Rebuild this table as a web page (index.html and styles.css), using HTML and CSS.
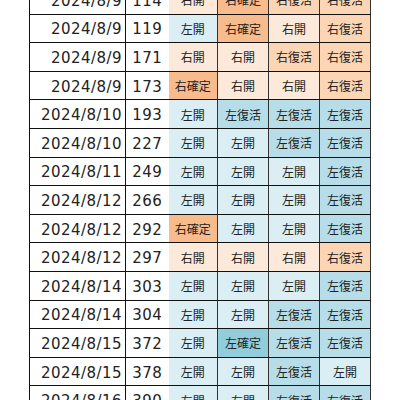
FILE: index.html
```html
<!DOCTYPE html>
<html lang="ja">
<head>
<meta charset="utf-8">
<link rel="stylesheet" href="styles.css">
</head>
<body>
<table class="sheet">
<colgroup>
<col class="c-date"><col class="c-num"><col class="c-a"><col class="c-b"><col class="c-b"><col class="c-b">
</colgroup>
<tbody>
<tr><td class="date">2024/8/9</td><td class="num">114</td><td class="ro first">右開</td><td class="rk">右確定</td><td class="rf">右復活</td><td class="rf">右復活</td></tr>
<tr><td class="date">2024/8/9</td><td class="num">119</td><td class="lo first">左開</td><td class="rk">右確定</td><td class="ro">右開</td><td class="rf">右復活</td></tr>
<tr><td class="date">2024/8/9</td><td class="num">171</td><td class="ro first">右開</td><td class="ro">右開</td><td class="rf">右復活</td><td class="rf">右復活</td></tr>
<tr><td class="date">2024/8/9</td><td class="num">173</td><td class="rk first">右確定</td><td class="ro">右開</td><td class="ro">右開</td><td class="rf">右復活</td></tr>
<tr><td class="date">2024/8/10</td><td class="num">193</td><td class="lo first">左開</td><td class="lf">左復活</td><td class="lf">左復活</td><td class="lf">左復活</td></tr>
<tr><td class="date">2024/8/10</td><td class="num">227</td><td class="lo first">左開</td><td class="lo">左開</td><td class="lf">左復活</td><td class="lf">左復活</td></tr>
<tr><td class="date">2024/8/11</td><td class="num">249</td><td class="lo first">左開</td><td class="lo">左開</td><td class="lo">左開</td><td class="lf">左復活</td></tr>
<tr><td class="date">2024/8/12</td><td class="num">266</td><td class="lo first">左開</td><td class="lo">左開</td><td class="lo">左開</td><td class="lf">左復活</td></tr>
<tr><td class="date">2024/8/12</td><td class="num">292</td><td class="rk first">右確定</td><td class="lo">左開</td><td class="lo">左開</td><td class="lf">左復活</td></tr>
<tr><td class="date">2024/8/12</td><td class="num">297</td><td class="ro first">右開</td><td class="ro">右開</td><td class="ro">右開</td><td class="rf">右復活</td></tr>
<tr><td class="date">2024/8/14</td><td class="num">303</td><td class="lo first">左開</td><td class="lo">左開</td><td class="lo">左開</td><td class="lf">左復活</td></tr>
<tr><td class="date">2024/8/14</td><td class="num">304</td><td class="lo first">左開</td><td class="lo">左開</td><td class="lf">左復活</td><td class="lf">左復活</td></tr>
<tr><td class="date">2024/8/15</td><td class="num">372</td><td class="lo first">左開</td><td class="lk">左確定</td><td class="lf">左復活</td><td class="lf">左復活</td></tr>
<tr><td class="date">2024/8/15</td><td class="num">378</td><td class="lo first">左開</td><td class="lo">左開</td><td class="lf">左復活</td><td class="lo">左開</td></tr>
<tr><td class="date">2024/8/16</td><td class="num">390</td><td class="lo first">左開</td><td class="lo">左開</td><td class="lf">左復活</td><td class="lf">左復活</td></tr>
</tbody>
</table>
</body>
</html>
```

FILE: styles.css
```css
html, body {
  margin: 0;
  padding: 0;
  background: #ffffff;
  overflow: hidden;
}

.sheet {
  border-collapse: collapse;
  table-layout: fixed;
  width: 342px;
  margin: -15px 0 0 29px;
  font-family: "DejaVu Sans", "Noto Sans CJK JP", sans-serif;
  color: #222222;
}

.c-date { width: 96px; }
.c-num { width: 43px; }
.c-a { width: 49px; }
.c-b { width: 51px; }

.sheet td {
  height: 28.6px;
  padding: 0;
  border: 1px solid #111;
  box-sizing: border-box;
  text-align: center;
  vertical-align: middle;
  white-space: nowrap;
  overflow: hidden;
}

.sheet td.date {
  text-align: right;
  padding: 2px 3px 0 0;
  font-size: 15px;
  letter-spacing: 0.45px;
}

.sheet td.num {
  font-size: 15px;
  letter-spacing: 0.4px;
  padding-top: 2px;
  border-right: none;
}

.sheet td.first {
  border-left: none;
}

.sheet td.lo, .sheet td.lf, .sheet td.lk,
.sheet td.ro, .sheet td.rf, .sheet td.rk {
  font-family: "Noto Sans CJK JP", sans-serif;
  font-size: 12px;
  border-left-color: #333;
  border-right-color: #333;
}

.lo { background: #daeef3; }
.lf { background: #b7dee8; }
.lk { background: #92cddc; }
.ro { background: #fde9d9; }
.rf { background: #fcd5b4; }
.rk { background: #f8bb8c; }
```
